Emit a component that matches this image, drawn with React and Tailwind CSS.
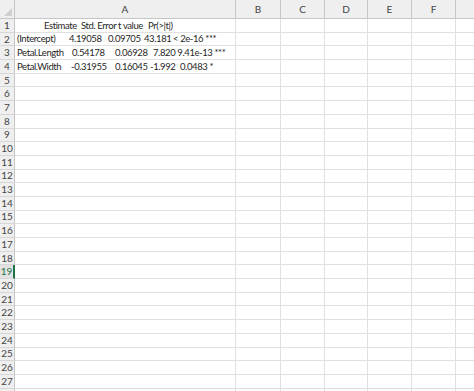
import React from 'react';

const colWidths = [221, 45, 44, 43, 44, 44];
const colNames = ['A', 'B', 'C', 'D', 'E', 'F'];

// each token: [text, start x on the page]
const cellText = {
  1: [['Estimate', 44], ['Std. Error t value', 81], ['Pr(>|t|)', 148]],
  2: [['(Intercept)', 17], ['4.19058', 69], ['0.09705', 108], ['43.181', 144], ['< 2e-16 ***', 173]],
  3: [['Petal.Length', 17], ['0.54178', 72], ['0.06928', 115], ['7.820 9.41e-13 ***', 153]],
  4: [['Petal.Width', 17], ['-0.31955', 71], ['0.16045', 115], ['-1.992', 150], ['0.0483 *', 180]],
};

function CornerCell() {
  return (
    <div className="h-[19px] w-[15px] shrink-0 bg-[#efefef] border-r border-b border-[#c6c6c6] flex items-end justify-end p-[2px]">
      <svg width="8" height="8" viewBox="0 0 8 8">
        <polygon points="8,0 8,8 0,8" fill="#cfcfcf" />
      </svg>
    </div>
  );
}

function CellText({ tokens }) {
  const first = tokens[0][1];
  return (
    <div
      className="flex items-center h-full whitespace-pre text-[9.5px] tracking-[-0.4px] text-[#1f1f1f] leading-none"
      style={{ paddingLeft: first - 15 }}
    >
      {tokens.map(([t, x], i) => {
        const next = tokens[i + 1];
        return (
          <span key={i} style={next ? { width: next[1] - x } : undefined} className="shrink-0">
            {t}
          </span>
        );
      })}
    </div>
  );
}

function Row({ n }) {
  const active = n === 19;
  const tokens = cellText[n];
  return (
    <div className="flex h-[13.7px]">
      <div
        className={
          'w-[15px] shrink-0 flex items-center justify-center text-[10px] border-b border-[#d6d6d6] ' +
          (active
            ? 'bg-[#e2e2e2] text-[#217346] border-r-2 border-r-[#217346]'
            : 'bg-[#efefef] text-[#444] border-r border-r-[#c6c6c6]')
        }
      >
        {n}
      </div>
      <div className="w-[221px] shrink-0 border-r border-b border-[#e0e0e0]">
        {tokens && <CellText tokens={tokens} />}
      </div>
      {colWidths.slice(1).map((w, i) => (
        <div key={i} style={{ width: w }} className="shrink-0 border-r border-b border-[#e0e0e0]" />
      ))}
      <div className="flex-1 border-b border-[#e0e0e0]" />
    </div>
  );
}

export default function App() {
  const rows = Array.from({ length: 28 }, (_, i) => i + 1);
  return (
    <div className="w-[474px] h-[391px] overflow-hidden bg-white" style={{ fontFamily: 'Lato, "Open Sans", sans-serif' }}>
      <div className="flex h-[19px]">
        <CornerCell />
        {colNames.map((c, i) => (
          <div
            key={c}
            style={{ width: colWidths[i] }}
            className="shrink-0 h-[19px] bg-[#efefef] border-r border-b border-[#c6c6c6] flex items-center justify-center text-[10px] text-[#444]"
          >
            {c}
          </div>
        ))}
        <div className="flex-1 h-[19px] bg-[#efefef] border-b border-[#c6c6c6]" />
      </div>
      {rows.map((n) => (
        <Row key={n} n={n} />
      ))}
    </div>
  );
}
